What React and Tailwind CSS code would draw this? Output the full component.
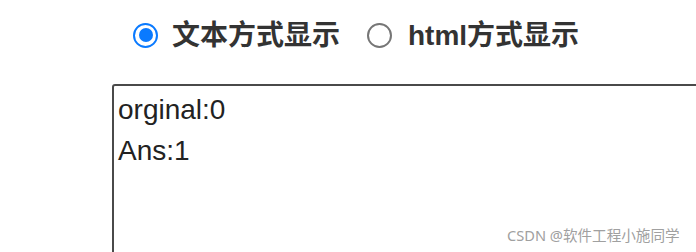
import React from "react";

function Radio({ checked }) {
  if (checked) {
    return (
      <span className="flex h-[25px] w-[25px] shrink-0 items-center justify-center rounded-full border-[2.5px] border-[#0a7aff] bg-white">
        <span className="block h-[14px] w-[14px] rounded-full bg-[#0a7aff]" />
      </span>
    );
  }
  return (
    <span className="block h-[25px] w-[25px] shrink-0 rounded-full border-2 border-[#767676] bg-white" />
  );
}

export default function App() {
  return (
    <div className="relative h-[252px] w-[696px] overflow-hidden bg-white font-['Liberation_Sans','Noto_Sans_CJK_SC',sans-serif] text-[#333]">
      <div className="flex h-[40px] items-center pl-[133px] mt-[15px] text-[28px] font-bold">
        <Radio checked />
        <span className="ml-[14px] mt-[2px] leading-[40px]">文本方式显示</span>
        <span className="ml-[27px]"><Radio /></span>
        <span className="ml-[16px] mt-[2px] leading-[40px]">html方式显示</span>
      </div>
      <div className="ml-[112px] mt-[29px] h-[220px] w-[640px] rounded-tl-[3px] border-2 border-[#4a4a4a] pl-[4px] pt-[3px] text-[28px] leading-[41px] text-[#222]">
        <div>orginal:0</div>
        <div>Ans:1</div>
      </div>
      <div className="absolute left-[507px] top-[225px] text-[14.6px] leading-[20px] text-[#a0a0a0] font-['Noto_Sans','Noto_Sans_CJK_SC',sans-serif]">
        CSDN @软件工程小施同学
      </div>
    </div>
  );
}
